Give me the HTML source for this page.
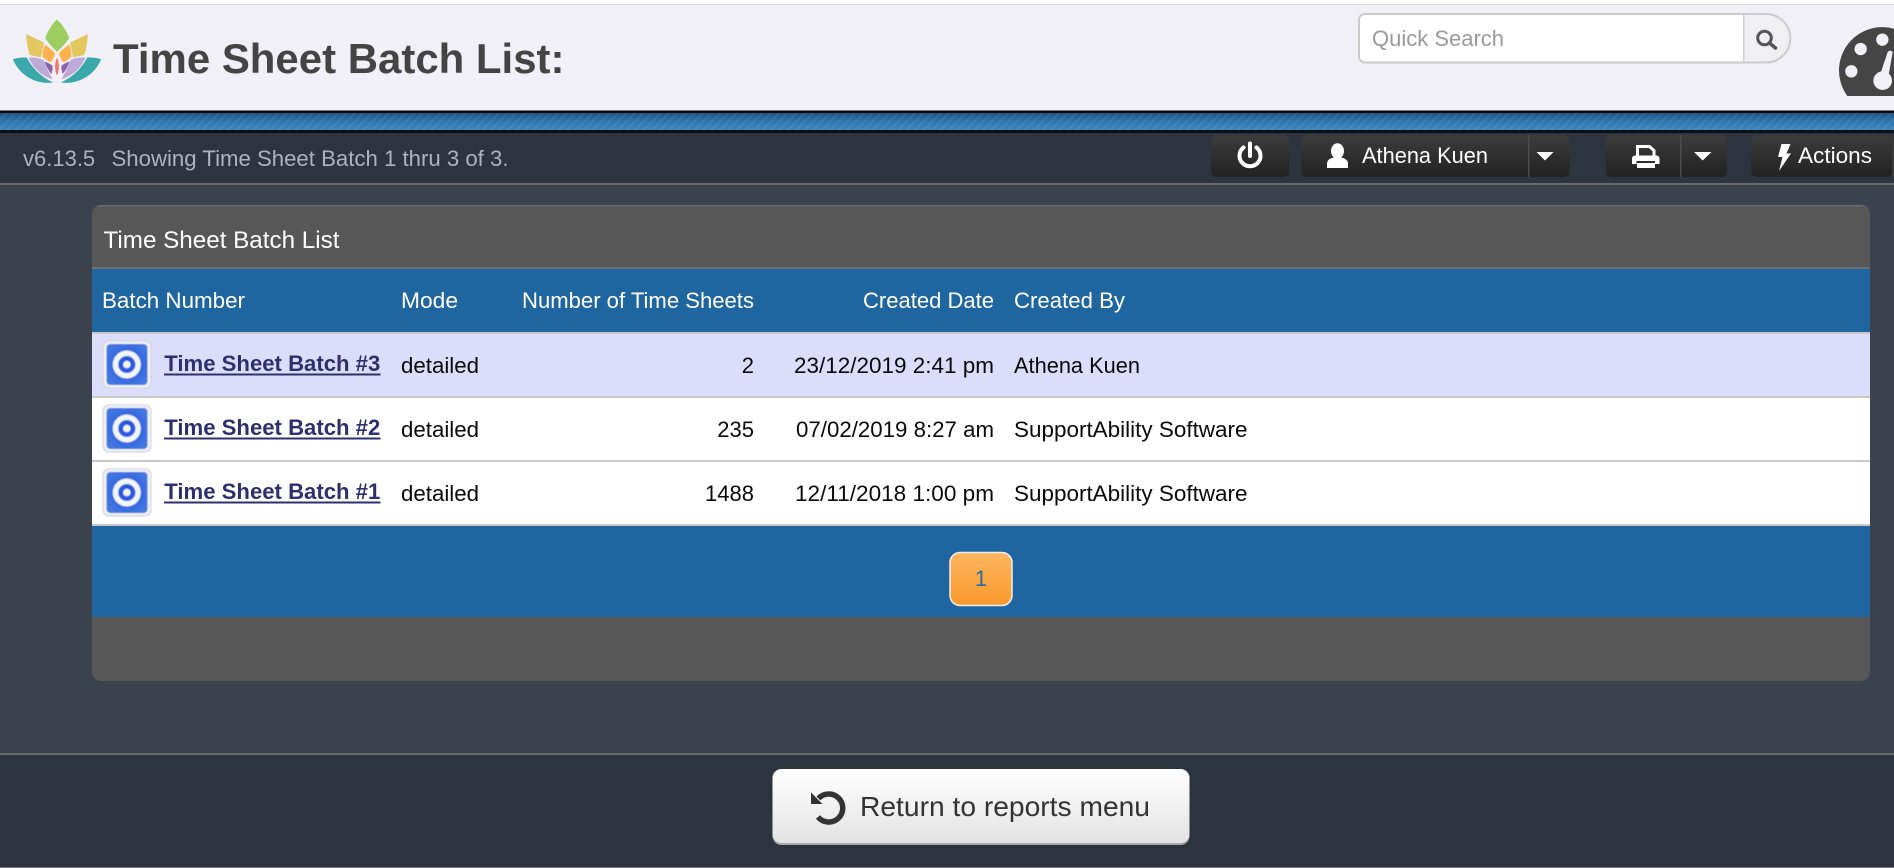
<!DOCTYPE html>
<html lang="en"><head><meta charset="utf-8"><title>Time Sheet Batch List</title>
<style>
html,body{margin:0;padding:0;background:#3b424d;width:1894px;height:868px;overflow:hidden}
svg{display:block}
text{font-family:"Liberation Sans",Arial,sans-serif;font-size:22px}
.w{fill:#fff}.k{fill:#0a0a0a}.l{fill:#2f2f6e;font-weight:700}
.e{text-anchor:end}
</style></head><body>
<svg width="1894" height="868" viewBox="0 0 1894 868" xmlns="http://www.w3.org/2000/svg">
<defs>
<linearGradient id="bandG" x1="0" y1="0" x2="0" y2="1"><stop offset="0" stop-color="#1b5588"/><stop offset=".5" stop-color="#2f75ad"/><stop offset="1" stop-color="#3d86bd"/></linearGradient>
<pattern id="hatch" width="6" height="6" patternUnits="userSpaceOnUse" patternTransform="rotate(45)"><rect width="2" height="6" fill="#fff" opacity=".06"/></pattern>
<linearGradient id="btnG" x1="0" y1="0" x2="0" y2="1"><stop offset="0" stop-color="#3c3c3c"/><stop offset="1" stop-color="#222"/></linearGradient>
<linearGradient id="pgG" x1="0" y1="0" x2="0" y2="1"><stop offset="0" stop-color="#fdb660"/><stop offset="1" stop-color="#f9992c"/></linearGradient>
<linearGradient id="retG" x1="0" y1="0" x2="0" y2="1"><stop offset="0" stop-color="#fff"/><stop offset="1" stop-color="#e3e3e3"/></linearGradient>
<radialGradient id="icoG" cx=".5" cy=".5" r=".7"><stop offset="0" stop-color="#1f4fe0"/><stop offset="1" stop-color="#4a80e0"/></radialGradient>
<filter id="b5" x="-10%" y="-10%" width="120%" height="120%"><feGaussianBlur stdDeviation=".55"/></filter>
<filter id="b3" x="-10%" y="-10%" width="120%" height="120%"><feGaussianBlur stdDeviation=".4"/></filter>
<clipPath id="pc"><rect x="92" y="205" width="1778" height="476" rx="9"/></clipPath>
<g id="ico" filter="url(#b3)">
<rect x="103" y="341" width="48" height="47" rx="6" fill="#f0f0f4" stroke="#d0d0d4" stroke-width="1"/>
<rect x="106.500" y="344" width="41" height="41" rx="4" fill="url(#icoG)"/>
<circle cx="126.800" cy="364.500" r="11.300" fill="none" stroke="#f2f5fc" stroke-width="5.500"/>
<circle cx="126.800" cy="364.500" r="3.800" fill="#f2f5fc"/>
</g>
</defs>

<!-- top header -->
<rect width="1894" height="111" fill="#f0f0f6"/>
<rect width="1894" height="4" fill="#fff"/>
<rect y="4" width="1894" height="1" fill="#dcdcdc"/>
<rect y="110.500" width="1894" height="2.500" fill="#050505"/>
<rect y="113" width="1894" height="17" fill="url(#bandG)"/>
<rect y="113" width="1894" height="17" fill="url(#hatch)"/>
<rect y="130" width="1894" height="3" fill="#0c1116"/>
<rect y="133" width="1894" height="50" fill="#2d343e"/>
<rect y="183" width="1894" height="2" fill="#6a6a6a"/>

<!-- logo -->
<svg x="0" y="10" width="120" height="90" viewBox="0 0 360 270">
<g filter="url(#b5)">
<path d="M170 30 C185 42 202 68 206 84 C198 98 182 114 171 124 C160 114 145 98 137 84 C141 68 158 42 170 30Z" fill="#9dcc5f" stroke="#9dcc5f" stroke-width="2"/>
<path d="M80 74 L131 98 L122 141 L90 134 C84 115 80 95 80 74Z" fill="#e3c75e" stroke="#e3c75e" stroke-width="2"/>
<path d="M262 74 L211 98 L220 141 L252 134 C258 115 262 95 262 74Z" fill="#e3c75e" stroke="#e3c75e" stroke-width="2"/>
<path d="M135 104 C146 112 157 121 165 130 C163 140 158 150 151 158 C143 152 135 146 128 141 C127 128 130 115 135 104Z" fill="#fbb04b"/>
<path d="M207 104 C196 112 185 121 177 130 C179 140 184 150 191 158 C199 152 207 146 214 141 C215 128 212 115 207 104Z" fill="#fbb04b"/>
<path d="M86 144 C100 141 116 143 130 150 C138 170 148 190 158 208 C125 198 100 175 86 144Z" fill="#bfa9d8"/>
<path d="M256 144 C242 141 226 143 212 150 C204 170 194 190 184 208 C217 198 242 175 256 144Z" fill="#bfa9d8"/>
<path d="M133 155 C141 157 150 161 157 167 C159 176 157 184 154 192 C145 181 138 168 133 155Z" fill="#8a63a9"/>
<path d="M209 155 C201 157 192 161 185 167 C183 176 185 184 188 192 C197 181 204 168 209 155Z" fill="#8a63a9"/>
<path d="M171 143 C178 155 179 180 171 197 C163 180 164 155 171 143Z" fill="#f4776c"/>
<path d="M40 148 C54 144 68 143 80 144 C96 175 122 200 156 217 C108 222 60 196 40 148Z" fill="#3aa8ab" stroke="#3aa8ab" stroke-width="2"/>
<path d="M302 148 C288 144 274 143 262 144 C246 175 220 200 186 217 C234 222 282 196 302 148Z" fill="#3aa8ab" stroke="#3aa8ab" stroke-width="2"/>
</g>
</svg>

<text x="113" y="73" style="font-size:42px;font-weight:700" fill="#444" textLength="451.500" lengthAdjust="spacingAndGlyphs">Time Sheet Batch List:</text>

<!-- search -->
<path d="M1365 14H1766A24 24 0 0 1 1766 62.500H1365A6 6 0 0 1 1359 56.500V20A6 6 0 0 1 1365 14Z" fill="#f0f0f2" stroke="#cccccc" stroke-width="2"/>
<path d="M1365 15H1743V61.500H1365A5 5 0 0 1 1360 56.500V20A5 5 0 0 1 1365 15Z" fill="#fff"/>
<rect x="1743" y="15" width="1.500" height="47" fill="#ccc"/>
<text x="1372" y="46" fill="#9a9a9a" textLength="132" lengthAdjust="spacingAndGlyphs">Quick Search</text>
<circle cx="1764.500" cy="38" r="6.800" fill="none" stroke="#555" stroke-width="3"/>
<path d="M1769.500 43L1775.500 48" stroke="#555" stroke-width="3.500" stroke-linecap="round"/>

<!-- dial -->
<svg x="1820" y="10" width="74" height="100" viewBox="0 0 222 300">
<g filter="url(#b5)">
<path d="M82 258 A130 130 0 1 1 292 258Z" fill="#444"/>
<circle cx="94" cy="184" r="18.500" fill="#f0f0f6"/>
<circle cx="122" cy="117" r="18.500" fill="#f0f0f6"/>
<circle cx="187" cy="89" r="18.500" fill="#f0f0f6"/>
<path d="M203 126 Q210 118 218 126 L206 195 L180 195 Z" fill="#f0f0f6"/>
<circle cx="188" cy="212" r="28" fill="#f0f0f6"/>
</g>
</svg>

<!-- toolbar -->
<text x="23" y="166" fill="#adb2bd">v6.13.5</text>
<text x="111.500" y="166" fill="#adb2bd" textLength="397" lengthAdjust="spacingAndGlyphs">Showing Time Sheet Batch 1 thru 3 of 3.</text>

<rect x="1211" y="135" width="78" height="42" rx="5" fill="url(#btnG)"/>
<path d="M1243.500 147.500A10.500 10.500 0 1 0 1256.500 147.500" fill="none" stroke="#fff" stroke-width="4" stroke-linecap="round"/>
<path d="M1250 143.500V156" stroke="#fff" stroke-width="4" stroke-linecap="round"/>

<rect x="1301.500" y="135" width="268" height="42" rx="5" fill="url(#btnG)"/>
<rect x="1528" y="135" width="1.500" height="42" fill="#4c4c4c"/>
<ellipse cx="1337.500" cy="151" rx="6.500" ry="7.800" fill="#fff"/>
<path d="M1327 168V164C1327 159.500 1331 158 1334 157.500H1341C1344 158 1348 159.500 1348 164V168Z" fill="#fff"/>
<text x="1362" y="163" class="w" textLength="126" lengthAdjust="spacingAndGlyphs">Athena Kuen</text>
<path d="M1536.500 152H1553.500L1545 160.500Z" fill="#fff"/>

<rect x="1606" y="135" width="121" height="42" rx="5" fill="url(#btnG)"/>
<rect x="1680" y="135" width="1.500" height="42" fill="#4c4c4c"/>
<path d="M1637.500 156V146.500H1649.500L1654 150.500V156" fill="none" stroke="#fff" stroke-width="3"/>
<path d="M1635 155.500H1656.500A3 3 0 0 1 1659.500 158.500V164H1655V161H1636.500V164H1632V158.500A3 3 0 0 1 1635 155.500Z" fill="#fff"/>
<rect x="1637" y="163" width="18" height="5" fill="#fff"/>
<path d="M1694 152H1711.500L1702.700 160.500Z" fill="#fff"/>

<rect x="1751.500" y="135" width="140.500" height="42" rx="5" fill="url(#btnG)"/>
<rect x="1892" y="135" width="2" height="42" fill="#3a3a3a"/>
<path d="M1781.500 144H1790.500L1786.500 153.500H1791L1779 171L1782.500 157H1778Z" fill="#fff"/>
<text x="1798" y="163" class="w" textLength="74" lengthAdjust="spacingAndGlyphs">Actions</text>

<!-- panel -->
<g clip-path="url(#pc)">
<rect x="92" y="205" width="1778" height="476" fill="#575757"/>
<rect x="92" y="205" width="1778" height="1.500" fill="#6b6b6b"/>
<rect x="92" y="267" width="1778" height="2" fill="#6e6e6e"/>
<rect x="92" y="269" width="1778" height="63" fill="#1f659f"/>
<rect x="92" y="332" width="1778" height="2" fill="#c9c9c9"/>
<rect x="92" y="334" width="1778" height="62" fill="#dcdcfb"/>
<rect x="92" y="396" width="1778" height="2" fill="#c9c9c9"/>
<rect x="92" y="398" width="1778" height="62" fill="#fff"/>
<rect x="92" y="460" width="1778" height="2" fill="#c9c9c9"/>
<rect x="92" y="462" width="1778" height="62" fill="#fff"/>
<rect x="92" y="524" width="1778" height="2" fill="#c9c9c9"/>
<rect x="92" y="526" width="1778" height="91" fill="#1f659f"/>
</g>
<text x="103.500" y="248" class="w" style="font-size:24px" textLength="236" lengthAdjust="spacingAndGlyphs">Time Sheet Batch List</text>

<text x="102" y="308" class="w" textLength="143" lengthAdjust="spacingAndGlyphs">Batch Number</text>
<text x="401" y="308" class="w" textLength="57" lengthAdjust="spacingAndGlyphs">Mode</text>
<text x="754" y="308" class="w e" textLength="232" lengthAdjust="spacingAndGlyphs">Number of Time Sheets</text>
<text x="994" y="308" class="w e" textLength="131" lengthAdjust="spacingAndGlyphs">Created Date</text>
<text x="1014" y="308" class="w" textLength="111" lengthAdjust="spacingAndGlyphs">Created By</text>

<use href="#ico"/>
<text x="164.300" y="371" class="l" textLength="216" lengthAdjust="spacingAndGlyphs">Time Sheet Batch #3</text>
<rect x="164" y="373.500" width="216.500" height="2" fill="#2f2f6e"/>
<text x="401" y="373" class="k" textLength="78" lengthAdjust="spacingAndGlyphs">detailed</text>
<text x="754" y="373" class="k e">2</text>
<text x="994" y="373" class="k e" textLength="200" lengthAdjust="spacingAndGlyphs">23/12/2019 2:41 pm</text>
<text x="1014" y="373" class="k" textLength="126" lengthAdjust="spacingAndGlyphs">Athena Kuen</text>

<use href="#ico" y="64"/>
<text x="164.300" y="435" class="l" textLength="216" lengthAdjust="spacingAndGlyphs">Time Sheet Batch #2</text>
<rect x="164" y="437.500" width="216.500" height="2" fill="#2f2f6e"/>
<text x="401" y="437" class="k" textLength="78" lengthAdjust="spacingAndGlyphs">detailed</text>
<text x="754" y="437" class="k e">235</text>
<text x="994" y="437" class="k e" textLength="198" lengthAdjust="spacingAndGlyphs">07/02/2019 8:27 am</text>
<text x="1014" y="437" class="k" textLength="233.500" lengthAdjust="spacingAndGlyphs">SupportAbility Software</text>

<use href="#ico" y="128"/>
<text x="164.300" y="499" class="l" textLength="216" lengthAdjust="spacingAndGlyphs">Time Sheet Batch #1</text>
<rect x="164" y="501.500" width="216.500" height="2" fill="#2f2f6e"/>
<text x="401" y="501" class="k" textLength="78" lengthAdjust="spacingAndGlyphs">detailed</text>
<text x="754" y="501" class="k e">1488</text>
<text x="994" y="501" class="k e" textLength="199" lengthAdjust="spacingAndGlyphs">12/11/2018 1:00 pm</text>
<text x="1014" y="501" class="k" textLength="233.500" lengthAdjust="spacingAndGlyphs">SupportAbility Software</text>

<!-- pagination -->
<rect x="950" y="552.500" width="62" height="53" rx="10" fill="url(#pgG)" stroke="#eee" stroke-width="1.500"/>
<text x="981" y="586" text-anchor="middle" fill="#2a6ca3">1</text>

<!-- footer -->
<rect y="753" width="1894" height="2" fill="#6a6a6a"/>
<rect y="755" width="1894" height="113" fill="#2d343e"/>
<rect y="867" width="1894" height="1" fill="#777"/>
<rect x="772.500" y="770" width="417" height="75" rx="9" fill="#a9a9a9"/>
<rect x="772.500" y="769" width="417" height="74" rx="9" fill="url(#retG)"/>
<path d="M818.500 798.500A14 14 0 1 1 818 817" fill="none" stroke="#333" stroke-width="5.500"/>
<path d="M811 792.500V804H822.500Z" fill="#333"/>
<text x="860" y="816" fill="#333" style="font-size:28px" textLength="290" lengthAdjust="spacingAndGlyphs">Return to reports menu</text>
</svg>
</body></html>
